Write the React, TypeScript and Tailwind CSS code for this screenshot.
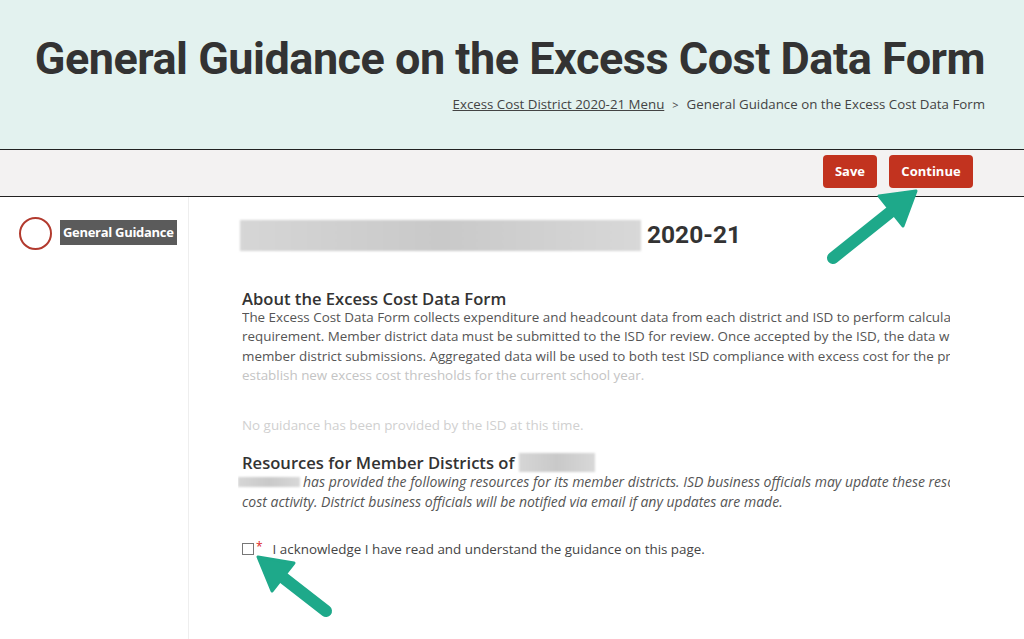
import React from 'react';

const body = { fontFamily: '"Open Sans", "Liberation Sans", sans-serif' };
const roboto = { fontFamily: 'Roboto, "Liberation Sans", sans-serif' };

function Blur({ className }: { className: string }) {
  // redacted (blurred) text block
  return (
    <span
      className={`inline-block shrink-0 bg-gradient-to-r from-[#d6d6d6] via-[#c9c9c9] to-[#d8d8d8] ${className}`}
    />
  );
}

export default function App() {
  return (
    <div className="relative w-[1024px] h-[639px] overflow-hidden bg-white text-[#444]" style={body}>
      {/* page header */}
      <header className="h-[149px] bg-[#e3f2ef] flex flex-col items-end pr-[39px]">
        <h1 className="mt-[33px] text-[45px] leading-[52px] font-bold text-[#333] tracking-[-0.5px]" style={roboto}>
          General Guidance on the Excess Cost Data Form
        </h1>
        <div className="mt-[10px] text-[13.3px] text-[#444] flex items-center gap-2">
          <span className="underline">Excess Cost District 2020-21 Menu</span>
          <span className="text-[11px]">&gt;</span>
          <span>General Guidance on the Excess Cost Data Form</span>
        </div>
      </header>

      {/* toolbar */}
      <div className="h-[48px] bg-[#f3f2f2] border-y border-[#222] flex items-start justify-end gap-3 pr-[51px] pt-[5px]">
        <button className="h-[33px] w-[54px] rounded bg-[#c2331f] text-white text-[13px] font-bold">Save</button>
        <button className="h-[33px] w-[84px] rounded bg-[#c2331f] text-white text-[13px] font-bold">Continue</button>
      </div>

      <div className="flex h-[442px]">
        {/* steps sidebar */}
        <aside className="w-[189px] shrink-0 border-r border-[#eee] pt-[20px] pl-[19px]">
          <div className="flex items-center gap-[8px]">
            <div className="w-[33px] h-[33px] rounded-full border-2 border-[#b23a2e]" />
            <span className="bg-[#5b5b5b] text-white text-[13px] font-bold px-[3px] py-[3px] leading-[19px] tracking-[-0.3px] -mt-[3px]">
              General Guidance
            </span>
          </div>
        </aside>

        {/* main form */}
        <main className="flex-1 pl-[51px] pt-[20px]">
          <div className="flex items-center gap-[6px]">
            <Blur className="w-[401px] h-[31px] blur-[1px]" />
            <span className="text-[24.5px] font-bold text-[#333]" style={roboto}>2020-21</span>
          </div>

          <section className="mt-[36px] ml-[2px] w-[708px]">
            <h2 className="text-[16.6px] font-semibold text-[#333] leading-[18px]">About the Excess Cost Data Form</h2>
            <div className="text-[13.4px] leading-[19.4px] whitespace-nowrap overflow-hidden">
              <p className="text-[#555]">The Excess Cost Data Form collects expenditure and headcount data from each district and ISD to perform calculations</p>
              <p className="text-[#555]">requirement. Member district data must be submitted to the ISD for review. Once accepted by the ISD, the data will</p>
              <p className="text-[#555]">member district submissions. Aggregated data will be used to both test ISD compliance with excess cost for the prior</p>
              <p className="text-[#c4c4c4]">establish new excess cost thresholds for the current school year.</p>
            </div>
            <p className="mt-[30px] text-[13.4px] text-[#d0d0d0]">No guidance has been provided by the ISD at this time.</p>

            <h2 className="mt-[18px] text-[16.6px] font-semibold text-[#333] leading-[18px] flex items-end gap-[5px]">
              Resources for Member Districts of <Blur className="w-[76px] h-[19px] blur-[1px]" />
            </h2>
            <div className="text-[14px] leading-[19.4px] italic text-[#555] whitespace-nowrap overflow-hidden -ml-[4px]">
              <p className="flex items-center">
                <Blur className="w-[62px] h-[10px] mr-[3px] blur-[1px]" />
                has provided the following resources for its member districts. ISD business officials may update these resources
              </p>
              <p className="ml-[4px]">cost activity. District business officials will be notified via email if any updates are made.</p>
            </div>
          </section>

          <label className="mt-[28px] ml-[2px] flex items-center text-[13.4px] text-[#444]">
            <span className="w-[12px] h-[12px] border border-[#777] bg-white" />
            <span className="text-[#d22] text-[12px] leading-none ml-[2px] -mt-[4px]">*</span>
            <span className="ml-[10px]">I acknowledge I have read and understand the guidance on this page.</span>
          </label>
        </main>
      </div>

      {/* annotation arrows */}
      <svg className="absolute inset-0 pointer-events-none" width="1024" height="639" viewBox="0 0 1024 639">
        <line x1="833" y1="258" x2="893" y2="210" stroke="#1ea98a" strokeWidth="12" strokeLinecap="round" />
        <polygon points="916,191 903,226 879,196" fill="#1ea98a" strokeLinejoin="round" stroke="#1ea98a" strokeWidth="3" />
        <line x1="326" y1="611" x2="281" y2="576" stroke="#1ea98a" strokeWidth="12" strokeLinecap="round" />
        <polygon points="258,557 294,563 272,591" fill="#1ea98a" strokeLinejoin="round" stroke="#1ea98a" strokeWidth="3" />
      </svg>
    </div>
  );
}
